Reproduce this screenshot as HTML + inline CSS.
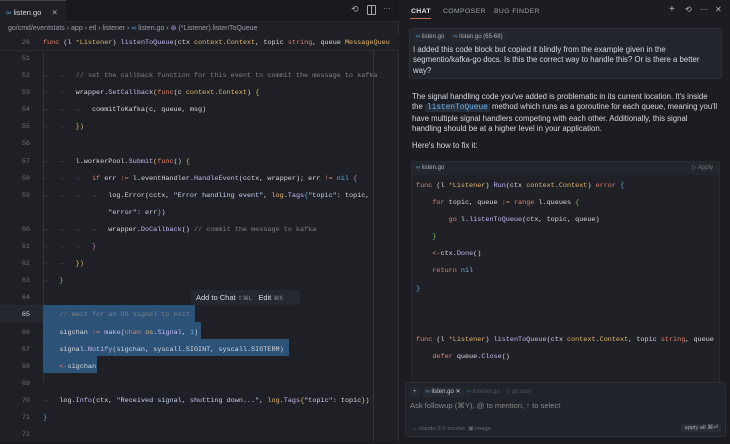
<!DOCTYPE html><html><head><style>
*{margin:0;padding:0;box-sizing:border-box}
body{width:730px;height:441px;background:#1b1d22;overflow:hidden;position:relative;font-family:"Liberation Sans",sans-serif}
.ed{position:absolute;left:0;top:0;width:399px;height:441px;background:#1e2025;border-right:1px solid #2c2f36}
.tabbar{position:absolute;left:0;top:0;width:399px;height:22px;background:#17191d;border-bottom:1px solid #2a2d33}
.tab{position:absolute;left:0;top:0;width:66px;height:22px;background:#1e2025;color:#d8dae0;font-size:7.5px;line-height:23px;padding-left:6px;border-top:1px solid #444}
.bc{position:absolute;left:8px;top:23px;font-size:7px;color:#9a9ea6;line-height:11px}
.mono{font-family:"Liberation Mono",monospace;font-size:6.8px;white-space:pre}
.ln{position:absolute;left:0;width:30px;text-align:right;color:#6b6f78}
.cd{position:absolute;left:43px;color:#d7d9de}
.k{color:#e0806f}.t{color:#e6b86a}.f{color:#c4b7f0}.s{color:#c7d2f0}.c{color:#7c8088}.n{color:#6cb0e8}.y{color:#e8c06a}.g{color:#8bc07a}.m{color:#d08bd0}
.ar{color:#555a62}
.sel{position:absolute;left:43px;background:#2c5278;height:17px}
.chat{position:absolute;left:400px;top:0;width:330px;height:441px;background:#1b1d22}
.ct{position:absolute;top:8px;font-size:6.8px;letter-spacing:.4px;color:#9aa0a8}
.txt{font-size:7.8px;color:#d6d8dd;line-height:10.4px;white-space:nowrap}
.pill{display:inline-block;background:#262930;color:#aeb2ba;font-size:6px;line-height:8px;padding:1px 3px;border-radius:2px;margin-right:3px}
</style></head><body>
<div class="ed">
<div class="tabbar"><div class="tab"><span style="color:#5ba0d0">∞</span> listen.go <span style="margin-left:8px;color:#aaa">✕</span></div>
<div style="position:absolute;left:351px;top:4px;color:#aaa;font-size:9px">⟲</div>
<div style="position:absolute;left:367px;top:5px;width:9px;height:10px;border:1px solid #aaa;border-radius:1px"><div style="position:absolute;left:3px;top:0;width:1px;height:8px;background:#aaa"></div></div>
<div style="position:absolute;left:383px;top:4px;color:#aaa;font-size:8px">···</div></div>
<div class="bc">go/cmd/eventstats › app › etl › listener › <span style="color:#5ba0d0">∞</span> listen.go › <span style="color:#b79be8">⊛</span> (*Listener).listenToQueue</div>
<div style="position:absolute;left:0;top:36px;width:399px;height:15px;background:#1e2025;border-bottom:1px solid #2a2d33"></div>
<div class="mono ln" style="top:39px">26</div>
<div class="mono cd" style="top:39px"><span class="k">func</span> (l <span class="t">*Listener</span>) <span class="f">listenToQueue</span>(ctx <span class="t">context.Context</span>, topic <span class="k">string</span>, queue <span class="t">MessageQueu</span></div>
<div style="position:absolute;left:373px;top:51px;width:1px;height:390px;background:#33363d"></div>
<div style="position:absolute;left:43px;top:52px;width:1px;height:330px;background:#30333a"></div>
<div style="position:absolute;left:0;top:305px;width:43px;height:17px;background:#24272d"></div>
<div class="sel" style="top:305px;width:152px"></div>
<div class="sel" style="top:322px;width:158px"></div>
<div class="sel" style="top:339px;width:246px"></div>
<div class="sel" style="top:356px;width:54px"></div>
<div class="mono ln" style="top:51px;line-height:17.1px">51
52
53
54
55
56
57
58
59

60
61
62
63
64
<span style="color:#d8dae0">65</span>
66
67
68
69
70
71
72</div>
<div class="mono cd" style="top:51px;line-height:17.1px"> 
<span class="ar">→   →   </span><span class="c">// set the callback function for this event to commit the message to kafka</span>
<span class="ar">→   →   </span>wrapper.<span class="f">SetCallback</span><span class="y">(</span><span class="k">func</span>(c <span class="t">context.Context</span>) <span class="y">{</span>
<span class="ar">→   →   →   </span>commitToKafka(c, queue, msg)
<span class="ar">→   →   </span><span class="y">})</span>

<span class="ar">→   →   </span>l.workerPool.<span class="f">Submit</span><span class="y">(</span><span class="k">func</span>() <span class="y">{</span>
<span class="ar">→   →   →   </span><span class="k">if</span> err <span class="k">:=</span> l.eventHandler.<span class="f">HandleEvent</span>(cctx, wrapper); err <span class="k">!=</span> <span class="n">nil</span> <span class="m">{</span>
<span class="ar">→   →   →   →   </span>log.Error(cctx, <span class="s">"Error handling event"</span>, <span class="t">log</span>.<span class="f">Tags</span><span class="n">{</span><span class="s">"topic"</span>: topic,
                <span class="s">"error"</span>: err<span class="n">}</span>)
<span class="ar">→   →   →   →   </span>wrapper.<span class="f">DoCallback</span>() <span class="c">// commit the message to kafka</span>
<span class="ar">→   →   →   </span><span class="m">}</span>
<span class="ar">→   →   </span><span class="y">})</span>
<span class="ar">→   </span><span class="g">}</span>

<span class="ar">→   </span><span class="c">// Wait for an OS signal to exit</span>
<span class="ar">→   </span>sigchan <span class="k">:=</span> <span class="f">make</span>(<span class="k">chan</span> <span class="t">os</span>.<span class="f">Signal</span>, <span class="n">1</span>)
<span class="ar">→   </span>signal.<span class="f">Notify</span>(sigchan, syscall.SIGINT, syscall.SIGTERM)
<span class="ar">→   </span><span class="k">&lt;-</span>sigchan

<span class="ar">→   </span>log.<span class="f">Info</span>(ctx, <span class="s">"Received signal, shutting down..."</span>, <span class="t">log</span>.<span class="f">Tags</span><span class="y">{</span><span class="s">"topic"</span>: topic<span class="y">}</span>)
<span class="n">}</span></div>
<div style="position:absolute;left:191px;top:290px;width:109px;height:15px;background:#25282e;border-radius:2px;font-size:7.5px;color:#d8dae0;line-height:15px;padding-left:5px">Add to Chat <span style="font-size:6px;color:#888">⇧⌘L</span>&nbsp;&nbsp; Edit <span style="font-size:6px;color:#888">⌘K</span></div>
</div>
<div class="chat">
<div class="ct" style="left:11px;color:#e4e6ea;font-weight:bold">CHAT</div>
<div style="position:absolute;left:10px;top:18px;width:21px;height:1px;background:#c0714e"></div>
<div class="ct" style="left:43px">COMPOSER</div>
<div class="ct" style="left:94px">BUG FINDER</div>
<div style="position:absolute;left:269px;top:4px;color:#bbb;font-size:10px">+</div>
<div style="position:absolute;left:285px;top:5px;color:#bbb;font-size:8px">⟲</div>
<div style="position:absolute;left:300px;top:5px;color:#bbb;font-size:8px">···</div>
<div style="position:absolute;left:315px;top:5px;color:#bbb;font-size:8px">✕</div>
<div style="position:absolute;left:9px;top:28px;width:313px;height:51px;background:#22252b;border:1px solid #2c2f35;border-radius:3px">
<div style="position:absolute;left:3px;top:3px;height:10px;font-size:6px;line-height:10px;white-space:nowrap"><span class="pill"><span style="color:#5ba0d0">∞</span> listen.go</span><span class="pill"><span style="color:#5ba0d0">∞</span> listen.go (65-68)</span></div>
<div class="txt" style="position:absolute;left:3px;top:16px">I added this code block but copied it blindly from the example given in the<br>segmentio/kafka-go docs. Is this the correct way to handle this? Or is there a better<br>way?</div></div>
<div class="txt" style="position:absolute;left:12px;top:92px">The signal handling code you've added is problematic in its current location. It's inside<br>the <span style="font-family:'Liberation Mono',monospace;color:#6cb0e8;background:#26303c;padding:0 2px">listenToQueue</span> method which runs as a goroutine for each queue, meaning you'll<br>have multiple signal handlers competing with each other. Additionally, this signal<br>handling should be at a higher level in your application.</div>
<div class="txt" style="position:absolute;left:12px;top:141px">Here's how to fix it:</div>
<div style="position:absolute;left:11px;top:161px;width:309px;height:225px;background:#1f2126;border:1px solid #272a30">
<div style="height:13px;background:#23262c;font-size:6px;color:#b0b4bb;line-height:13px;padding-left:4px"><span style="color:#5ba0d0">∞</span> listen.go<span style="position:absolute;right:6px;color:#777">▷ Apply</span></div>
<div class="mono" style="position:absolute;left:4px;top:16px;line-height:17.1px;color:#d7d9de"><span class="k">func</span> (l <span class="t">*Listener</span>) <span class="f">Run</span>(ctx <span class="t">context.Context</span>) <span class="k">error</span> <span class="n">{</span>
    <span class="k">for</span> topic, queue <span class="k">:=</span> <span class="k">range</span> l.queues <span class="g">{</span>
        <span class="k">go</span> l.<span class="f">listenToQueue</span>(ctx, topic, queue)
    <span class="g">}</span>
    <span class="k">&lt;-</span>ctx.<span class="f">Done</span>()
    <span class="k">return</span> <span class="n">nil</span>
<span class="n">}</span>


<span class="k">func</span> (l <span class="t">*Listener</span>) <span class="f">listenToQueue</span>(ctx <span class="t">context.Context</span>, topic <span class="k">string</span>, queue
    <span class="k">defer</span> queue.<span class="f">Close</span>()


    <span class="k">for</span> <span class="g">{</span></div></div>
<div style="position:absolute;left:5px;top:382px;width:321px;height:55px;background:#202329;border:1px solid #2c2f35;border-radius:3px">
<div style="position:absolute;left:4px;top:4px;font-size:6px;line-height:10px;color:#999;white-space:nowrap"><span class="pill">+</span><span class="pill" style="color:#ccc"><span style="color:#5ba0d0">∞</span> listen.go ✕</span><span style="color:#555"><span style="color:#3a6a8a">∞</span> listener.go &nbsp;&nbsp; ≡ go.sum</span></div>
<div style="position:absolute;left:4px;top:18px;font-size:7.6px;color:#888">Ask followup (⌘Y), @ to mention, ↑ to select</div>
<div style="position:absolute;left:6px;top:43px;font-size:5.8px;color:#666">⌄ claude-3.5-sonnet &nbsp;▣ image</div>
<div style="position:absolute;right:4px;top:41px;font-size:5.8px;color:#aaa;background:#2a2d33;padding:1px 3px;border-radius:2px">apply all ⌘⏎</div>
</div></div>
</body></html>
